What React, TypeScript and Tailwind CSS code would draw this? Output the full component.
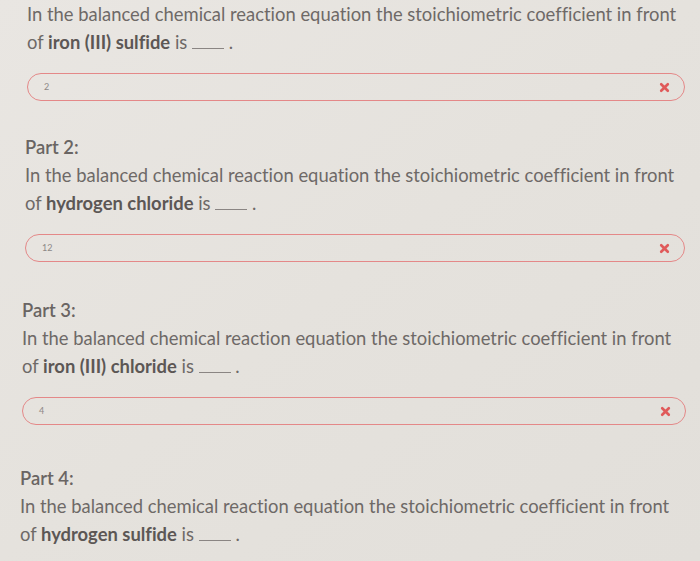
const parts = [
  { label: null, subject: 'iron (III) sulfide', answer: '2', pad: 'pl-[27px] pr-[15px] pt-0' },
  { label: 'Part 2:', subject: 'hydrogen chloride', answer: '12', pad: 'pl-[25px] pr-[15px] pt-[32px]' },
  { label: 'Part 3:', subject: 'iron (III) chloride', answer: '4', pad: 'pl-[22px] pr-[14px] pt-[34px]' },
  { label: 'Part 4:', subject: 'hydrogen sulfide', answer: null, pad: 'pl-[20px] pr-[14px] pt-[39px]' },
]

function AnswerBox({ value }: { value: string }) {
  return (
    <div className="mt-[17px] h-[28px] rounded-full border-[1.5px] border-[#e48888] flex items-center justify-between pl-[16px] pr-[12px]">
      <span className="text-[9px] text-[#8d8886]">{value}</span>
      <svg width="11" height="11" viewBox="0 0 10 10" className="mr-[2px]">
        <path d="M2 2 L8 8 M8 2 L2 8" stroke="#e05a5a" strokeWidth="2.4" strokeLinecap="round" />
      </svg>
    </div>
  )
}

export default function App() {
  return (
    <div
      className="w-[700px] h-[561px] overflow-hidden bg-gradient-to-br from-[#e9e6e2] via-[#e5e2dd] to-[#e2dfda] text-[#6e6967] text-[18.4px] leading-[28px] [font-variant-ligatures:none]"
      style={{ fontFamily: 'Lato, "Open Sans", sans-serif' }}
    >
      {parts.map((p, i) => (
        <div key={i} className={p.pad}>
          {p.label && <div className="font-semibold text-[#6a6563]">{p.label}</div>}
          <div className="whitespace-nowrap">In the balanced chemical reaction equation the stoichiometric coefficient in front</div>
          <div>
            of <span className="font-bold text-[#5c5755]">{p.subject}</span> is{' '}
            <span className="inline-block w-[32px] border-b border-[#8a8583]"></span> .
          </div>
          {p.answer && <AnswerBox value={p.answer} />}
        </div>
      ))}
    </div>
  )
}
